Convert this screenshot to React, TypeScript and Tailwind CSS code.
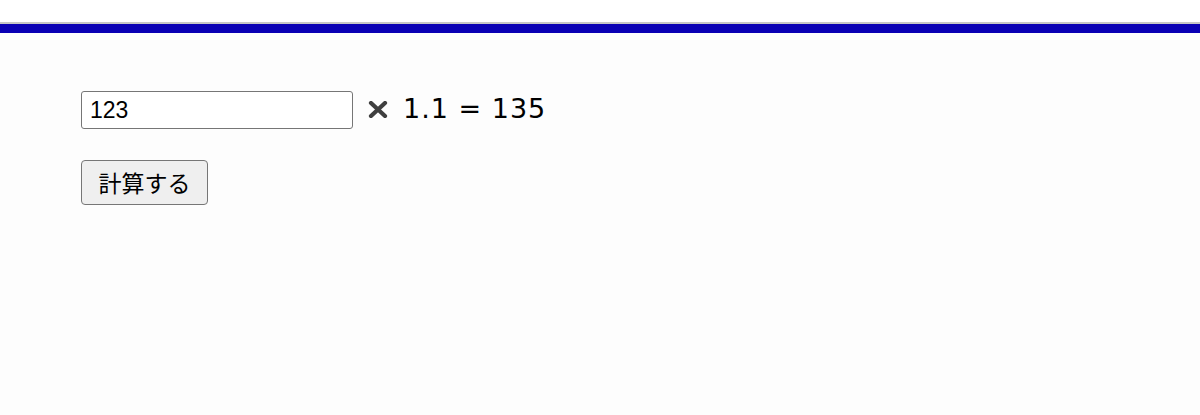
import React from "react";

export default function App() {
  return (
    <div className="min-h-[415px] w-full bg-[#fdfdfd]">
      <div className="h-[22px] bg-white" />
      <div className="h-[2px] bg-[#c6c6c6]" />
      <div className="h-[9px] bg-[#0a00b4]" />
      <div className="pl-[81px] pt-[58px]">
        <div className="flex items-center h-[38px]">
          <input
            defaultValue="123"
            className="w-[272px] h-[38px] border border-[#767676] rounded-[3px] bg-white px-[8px] text-[23px] text-black outline-none"
            style={{ fontFamily: '"Liberation Sans", Arial, sans-serif' }}
          />
          <svg
            width="20"
            height="17"
            viewBox="0 0 20 17"
            className="ml-[15px] mt-[-1px]"
          >
            <path
              d="M3 2 L17 15 M17 2 L3 15"
              stroke="#3f3f3f"
              strokeWidth="4.2"
              strokeLinecap="round"
              fill="none"
            />
          </svg>
          <span
            className="ml-[15px] mt-[-4px] text-[27px] text-black tracking-[1px] leading-none"
            style={{ fontFamily: '"DejaVu Sans", sans-serif' }}
          >
            1.1 = 135
          </span>
        </div>
        <button
          className="mt-[31px] w-[127px] h-[45px] border border-[#767676] rounded-[4px] bg-[#efefef] text-[23px] text-black flex items-center justify-center"
          style={{ fontFamily: '"Noto Sans CJK JP", sans-serif' }}
        >
          計算する
        </button>
      </div>
    </div>
  );
}
